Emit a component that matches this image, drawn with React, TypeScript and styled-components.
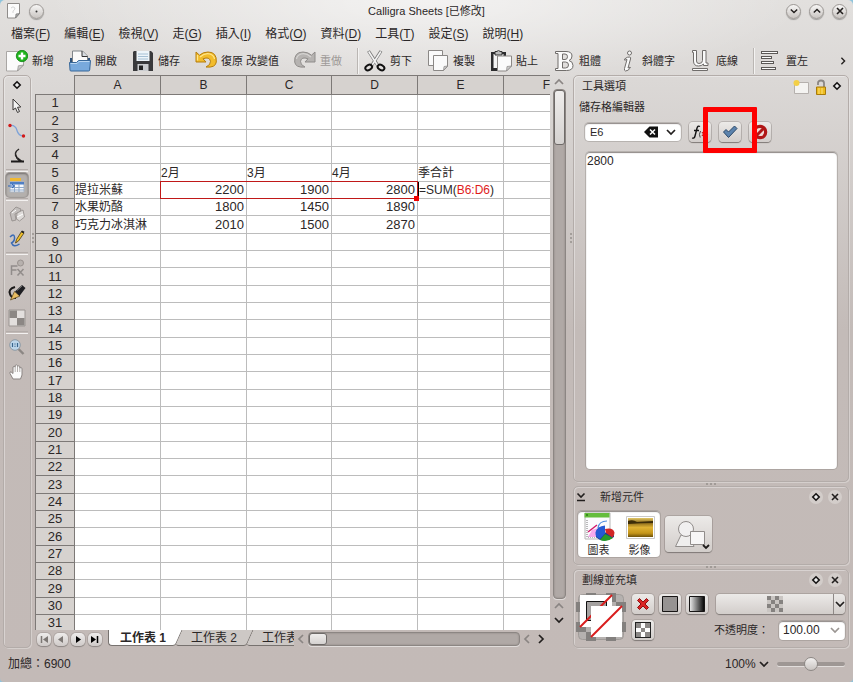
import React from 'react';
import styled, { createGlobalStyle, css } from 'styled-components';

const GlobalStyle = createGlobalStyle`
  *, *::before, *::after { box-sizing: border-box; }
  body {
    margin: 0;
    background: #8fc4dc;
    color: #2b2727;
    font: 12px/16px "Liberation Sans", "Noto Sans CJK TC", sans-serif;
  }
  button, input, select, textarea {
    font: inherit;
    color: inherit;
    margin: 0;
    padding: 0;
    border: 0;
    background: none;
    outline: none;
  }
`;

const Window = styled.div`
  display: flex;
  flex-direction: column;
  height: 100vh;
  overflow: hidden;
  border-radius: 5px 5px 4px 4px;
  background:
    radial-gradient(ellipse 380px 90px at 50% 0, rgba(255, 255, 255, 0.6), rgba(255, 255, 255, 0)),
    linear-gradient(#e2e0de 0, #dbd8d6 80px, #c3bbb8 330px, #c3bab7 100%);
`;

/* ---------- title bar, menu, main toolbar ---------- */

const TitleBar = styled.header`
  display: grid;
  grid-template-columns: 1fr auto 1fr;
  align-items: center;
  flex: none;
  height: 22px;
  padding: 0 6px;
`;

const TitleGroup = styled.div<{ $end?: boolean }>`
  display: flex;
  align-items: center;
  gap: 8px;
  justify-content: ${(p) => (p.$end ? 'flex-end' : 'flex-start')};
`;

const TitleText = styled.h1`
  margin: 0;
  font-size: 11px;
  font-weight: 400;
  line-height: 16px;
`;

const RoundButton = styled.button`
  display: grid;
  place-items: center;
  width: 15px;
  height: 15px;
  border-radius: 50%;
  border: 1px solid #9b9794;
  background: linear-gradient(#f7f6f5, #c9c5c2);
  box-shadow: 0 1px 1px rgba(0, 0, 0, 0.3);
`;

const MenuBar = styled.nav`
  display: flex;
  align-items: center;
  gap: 14px;
  flex: none;
  height: 24px;
  padding: 0 11px;
`;

const MenuButton = styled.button`
  white-space: nowrap;
  line-height: 18px;
  u { text-underline-offset: 2px; }
`;

const ToolBar = styled.div`
  display: flex;
  align-items: center;
  flex: none;
  height: 29px;
  padding: 0 6px;
  font-size: 11px;
`;

const ToolButton = styled.button`
  display: flex;
  align-items: center;
  gap: 4px;
  flex: none;
  margin-right: 15px;
  white-space: nowrap;
  &:disabled { color: #9d9997; }
`;

const ToolSeparator = styled.span`
  flex: none;
  width: 2px;
  height: 26px;
  margin-right: 5px;
  border-left: 1px solid #bab6b3;
  border-right: 1px solid #f4f3f2;
`;

const Overflow = styled.button`
  display: flex;
  margin-left: auto;
`;

/* ---------- main area ---------- */

const Main = styled.main`
  display: grid;
  grid-template-columns: 28px 4px minmax(0, 1fr) 5px 276px;
  flex: 1;
  min-height: 0;
  padding: 0 4px 0 3px;
`;

const frame = css`
  border: 1px solid #b3aca9;
  border-radius: 5px;
  box-shadow: inset 1px 1px 0 rgba(255, 255, 255, 0.35), 1px 1px 0 rgba(255, 255, 255, 0.3);
`;

const ToolBox = styled.aside`
  ${frame}
  display: flex;
  flex-direction: column;
  align-items: center;
  gap: 1px;
`;

const ToolBoxHandle = styled.button`
  display: grid;
  place-items: center;
  height: 17px;
`;

const ToolBoxButton = styled.button<{ $active?: boolean }>`
  display: grid;
  place-items: center;
  flex: none;
  width: 22px;
  height: 24px;
  border-radius: 4px;
  ${(p) =>
    p.$active &&
    css`
      background: #b4b0ad;
      box-shadow: inset 0 1px 2px #74706e, 0 0 0 1px #a09b98;
    `}
`;

const ToolBoxRule = styled.hr`
  flex: none;
  width: 22px;
  height: 3px;
  margin: 0;
  border: 0;
  border-top: 1px solid #b4adaa;
  border-bottom: 1px solid #f3f1f0;
`;

const Splitter = styled.div<{ $horizontal?: boolean }>`
  display: flex;
  flex-direction: ${(p) => (p.$horizontal ? 'row' : 'column')};
  align-items: center;
  justify-content: center;
  gap: 2px;
  flex: none;
  ${(p) => (p.$horizontal ? 'height: 4px;' : 'padding-bottom: 248px;')}
  i {
    width: 2px;
    height: 2px;
    border-radius: 1px;
    background: #96908d;
  }
`;

const SheetArea = styled.section`
  display: flex;
  flex-direction: column;
  min-height: 0;
`;

const SheetRow = styled.div`
  display: flex;
  flex: 1;
  min-height: 0;
`;

const SheetView = styled.div`
  flex: 1;
  min-width: 0;
  overflow: hidden;
`;

const Grid = styled.table`
  width: 555px;
  table-layout: fixed;
  border-collapse: separate;
  border-spacing: 0;
  th, td {
    height: 17px;
    padding: 0;
    line-height: 16px;
    font-weight: 400;
    white-space: nowrap;
  }
  tbody tr:nth-child(3n + 2) > * { height: 18px; }
`;

const Col = styled.col<{ $w: number }>`
  width: ${(p) => p.$w}px;
`;

const Corner = styled.td`
  border-bottom: 1px solid #7d7977;
  border-right: 1px solid #7d7977;
`;

const ColumnHead = styled.th`
  && { height: 20px; }
  background: #d6d2cf;
  border: solid #7d7977;
  border-width: 1px 1px 1px 0;
`;

const RowHead = styled.th`
  background: #d6d2cf;
  border: solid #7d7977;
  border-width: 0 1px 1px 1px;
  font-size: 13px;
`;

const Cell = styled.td<{ $number?: boolean }>`
  position: relative;
  background: #fff;
  border: solid #bcbcbc;
  border-width: 0 1px 1px 0;
  text-align: ${(p) => (p.$number ? 'right' : 'left')};
  && {
    padding: ${(p) => (p.$number ? '0 2px 0 0' : '0')};
    font-size: ${(p) => (p.$number ? 13 : 12)}px;
  }
`;

const RangeOutline = styled.div`
  position: absolute;
  z-index: 1;
  top: -1px;
  left: -1px;
  width: 258px;
  height: 18px;
  border: 1px solid #c01818;
  &::after {
    content: '';
    position: absolute;
    right: -2px;
    bottom: -3px;
    width: 5px;
    height: 5px;
    background: #f00000;
  }
`;

const CellEditor = styled.span`
  display: block;
  border-left: 1px solid #000;
  em {
    font-style: normal;
    color: #e01b1b;
  }
`;

const VScroll = styled.div`
  display: flex;
  flex-direction: column;
  align-items: center;
  width: 18px;
  padding-bottom: 3px;
`;

const ScrollButton = styled.button`
  display: grid;
  place-items: center;
  flex: none;
  width: 14px;
  height: 14px;
`;

const Track = styled.div<{ $vertical?: boolean }>`
  flex: 1;
  min-height: 0;
  border: 1px solid #8c8683;
  border-radius: 4px;
  background: #b0a9a6;
  box-shadow: inset 0 0 2px #857f7c, 0 1px 0 rgba(255, 255, 255, 0.5);
  ${(p) => (p.$vertical ? 'width: 13px;' : 'height: 14px;')}
`;

const Thumb = styled.div<{ $vertical?: boolean }>`
  border: 1px solid #6e6a68;
  border-radius: 3px;
  background: linear-gradient(#efedec, #d5d2d0);
  ${(p) => (p.$vertical ? 'width: 11px; height: 55px;' : 'width: 18px; height: 12px;')}
`;

const BottomBar = styled.div`
  display: flex;
  align-items: center;
  flex: none;
  height: 18px;
`;

const SheetNav = styled.div`
  display: flex;
  gap: 3px;
  padding-left: 2px;
  width: 73px;
`;

const NavButton = styled.button<{ $dim?: boolean }>`
  display: grid;
  place-items: center;
  width: 14px;
  height: 13px;
  border-radius: 5px;
  color: ${(p) => (p.$dim ? '#7c7774' : '#000')};
  background: linear-gradient(#eeeceb, #cfcac8);
  box-shadow: 0 1px 1px #8e8886, 0 0 0 1px rgba(120, 112, 108, 0.25);
`;

const Tabs = styled.div`
  display: flex;
  align-self: stretch;
  width: 186px;
  overflow: hidden;
`;

const Tab = styled.button<{ $active?: boolean }>`
  position: relative;
  z-index: ${(p) => (p.$active ? 1 : 0)};
  flex: none;
  height: 16px;
  padding: 0 13px 0 12px;
  line-height: 16px;
  white-space: nowrap;
  font-weight: ${(p) => (p.$active ? 700 : 400)};
  &::before {
    content: '';
    position: absolute;
    z-index: -1;
    inset: 0 0 0 ${(p) => (p.$active ? 6 : 0)}px;
    transform: skewX(-24deg);
    border: solid #77726f;
    border-width: 0 1px 1px 0;
    border-radius: 0 0 3px 3px;
    background: ${(p) => (p.$active ? '#fff' : '#cdc8c5')};
  }
  &::after {
    content: '';
    position: absolute;
    z-index: -1;
    inset: 0 auto 0 0;
    display: ${(p) => (p.$active ? 'block' : 'none')};
    width: 20px;
    border: solid #77726f;
    border-width: 0 0 1px 1px;
    border-radius: 0 0 0 4px;
    background: #fff;
  }
`;

const HScroll = styled.div`
  display: flex;
  align-items: center;
  flex: 1;
  padding-right: 20px;
`;

/* ---------- docks ---------- */

const Docks = styled.aside`
  display: flex;
  flex-direction: column;
  min-height: 0;
`;

const Dock = styled.section<{ $grow?: boolean }>`
  ${frame}
  display: flex;
  flex-direction: column;
  ${(p) => (p.$grow ? 'flex: 1; min-height: 0;' : 'flex: none; height: 79px;')}
  font-size: 11px;
`;

const DockHead = styled.header<{ $collapsible?: boolean }>`
  display: flex;
  align-items: center;
  flex: none;
  height: 20px;
  padding: 0 6px 0 ${(p) => (p.$collapsible ? 2 : 8)}px;
`;

const DockTitle = styled.h2<{ $indent?: boolean }>`
  flex: 1;
  margin: 0;
  padding-left: ${(p) => (p.$indent ? 14 : 0)}px;
  font-size: 11px;
  font-weight: 400;
`;

const DockTool = styled.button<{ $round?: boolean }>`
  display: grid;
  place-items: center;
  height: 14px;
  margin-left: 5px;
  ${(p) => p.$round && 'width: 14px; border-radius: 50%; background: #d3cdca;'}
`;

const EditorLabel = styled.label`
  padding-left: 5px;
  line-height: 22px;
`;

const CellBar = styled.div`
  display: flex;
  align-items: center;
  gap: 8px;
  height: 28px;
  padding-left: 11px;
`;

const field = css`
  background: #fff;
  border-radius: 4px;
  box-shadow: inset 0 1px 1px #8e8886, 0 0 0 1px rgba(130, 122, 118, 0.35);
`;

const NameBox = styled.div`
  ${field}
  display: flex;
  align-items: center;
  gap: 8px;
  width: 96px;
  height: 18px;
  padding: 0 5px;
  input {
    flex: 1;
    min-width: 0;
    line-height: 16px;
  }
  button { display: flex; }
`;

const raised = css`
  border-radius: 4px;
  background: linear-gradient(#eceae8, #d2cdca);
  box-shadow: 0 1px 1px #817b78, 0 0 0 1px rgba(120, 112, 108, 0.3);
`;

const PushButton = styled.button`
  ${raised}
  display: grid;
  place-items: center;
  flex: none;
  width: 22px;
  height: 20px;
`;

const Highlighted = styled.div`
  position: relative;
  display: flex;
  &::after {
    content: '';
    position: absolute;
    z-index: 2;
    inset: -15px -16px -11px;
    border: 5px solid #fe0000;
    border-radius: 1px;
    pointer-events: none;
  }
`;

const FormulaText = styled.textarea`
  ${field}
  flex: 1;
  min-height: 0;
  margin: 6px 11px 12px 12px;
  padding: 1px;
  resize: none;
  font-size: 12px;
`;

const ShapeRow = styled.div`
  display: flex;
  align-items: center;
  gap: 5px;
  padding: 4px 0 0 4px;
`;

const ShapeList = styled.div`
  ${field}
  display: flex;
  width: 82px;
  height: 46px;
`;

const ShapeItem = styled.button`
  display: flex;
  flex: 1;
  flex-direction: column;
  align-items: center;
  line-height: 14px;
`;

const ShapeMenu = styled.button`
  ${raised}
  display: flex;
  align-items: center;
  justify-content: center;
  width: 47px;
  height: 36px;
`;

const FillBody = styled.div`
  display: flex;
  gap: 6px;
  padding: 3px 3px 0 2px;
`;

const FillColumn = styled.div`
  display: flex;
  flex: 1;
  flex-direction: column;
  gap: 6px;
  padding-top: 1px;
`;

const FillRow = styled.div`
  display: flex;
  align-items: center;
  gap: 5px;
`;

const PatternButton = styled.button`
  ${raised}
  display: grid;
  grid-template-columns: 1fr 12px;
  align-items: center;
  justify-items: center;
  flex: 1;
  height: 20px;
  margin-left: 3px;
  span {
    display: grid;
    place-items: center;
    width: 100%;
    height: 20px;
    border-left: 1px solid #8e8886;
  }
`;

const OpacityLabel = styled.label`
  margin-left: auto;
  padding-right: 5px;
`;

const OpacityBox = styled.div`
  ${field}
  display: flex;
  align-items: center;
  width: 66px;
  height: 19px;
  padding: 0 4px 0 4px;
  font-size: 12px;
  input { width: 47px; }
  button { display: flex; }
`;

/* ---------- status bar ---------- */

const StatusBar = styled.footer`
  display: flex;
  align-items: center;
  flex: none;
  height: 34px;
  padding: 0 8px 2px;
`;

const Sum = styled.output`
  flex: 1;
`;

const ZoomBox = styled.label`
  display: flex;
  align-items: center;
  gap: 2px;
  margin-right: 8px;
  select {
    appearance: none;
    width: 32px;
    line-height: 16px;
  }
`;

const ZoomSlider = styled.input`
  appearance: none;
  width: 68px;
  height: 16px;
  &::-webkit-slider-runnable-track {
    height: 4px;
    border-radius: 2px;
    background: #9e9794;
    box-shadow: 0 1px 0 #e2dedc;
  }
  &::-webkit-slider-thumb {
    appearance: none;
    width: 14px;
    height: 14px;
    margin-top: -5px;
    border: 1px solid #8d8885;
    border-radius: 50%;
    background: linear-gradient(#f2f0ef, #c9c4c1);
  }
`;

/* ---------- icons ---------- */

type SvgProps = { w: number; h: number; children: React.ReactNode };
const Svg = ({ w, h, children }: SvgProps) => (
  <svg width={w} height={h} viewBox={`0 0 ${w} ${h}`} fill="none" aria-hidden="true">
    {children}
  </svg>
);

type Dir = 'up' | 'down' | 'left' | 'right';
const chevrons: Record<Dir, string> = {
  up: 'M1 7 5 3l4 4',
  down: 'M1 3l4 4 4-4',
  left: 'M7 1 3 5l4 4',
  right: 'M3 1l4 4-4 4',
};
const Chevron = ({ dir, color = '#221f1e', size = 10 }: { dir: Dir; color?: string; size?: number }) => (
  <svg width={size} height={size} viewBox="0 0 10 10" fill="none" aria-hidden="true">
    <path d={chevrons[dir]} stroke={color} strokeWidth="1.7" />
  </svg>
);

const Diamond = () => (
  <Svg w={10} h={10}>
    <path d="M5 1.8 8.2 5 5 8.2 1.8 5Z" fill="#eee" stroke="#171515" strokeWidth="1.6" />
  </Svg>
);

const Cross = () => (
  <Svg w={10} h={10}>
    <path d="m2 2 6 6M8 2 2 8" stroke="#221f1e" strokeWidth="1.6" />
  </Svg>
);

const Page = ({ x = 0, y = 0 }: { x?: number; y?: number }) => (
  <g transform={`translate(${x} ${y})`}>
    <path d="M.5.5h14v11l-4 4H.5Z" fill="#fafafa" stroke="#8b8886" />
    <path d="m10.5 15.5.5-4 3.5-.5Z" fill="#cfcfcf" stroke="#8b8886" strokeWidth=".7" />
  </g>
);

const icons = {
  doc: (
    <Svg w={15} h={16}>
      <path d="M1.5.5h12v10l-4 4.500h-8Z" fill="#fbfbfb" stroke="#8f8c8a" />
      <path d="m9.500 15 .5-4 3.500-.5Z" fill="#aaa" stroke="#777" strokeWidth=".7" />
      <path d="M5 5q2-2.500 4 0Q9 7 7 8v2" stroke="#d4d4d4" />
    </Svg>
  ),
  new: (
    <Svg w={22} h={22}>
      <path d="M.5 1.500h17V15l-6 6H.5Z" fill="#fbfbfb" stroke="#a9a6a4" />
      <path d="m11.500 21 .8-5.200 5.200-.8Z" fill="#ccc" stroke="#8f8c8a" strokeWidth=".7" />
      <circle cx="16" cy="6" r="5.700" fill="#1fb41c" stroke="#0d8110" strokeWidth=".8" />
      <path d="M16 2.500v7M12.500 6h7" stroke="#fff" strokeWidth="2.400" />
    </Svg>
  ),
  open: (
    <Svg w={22} h={22}>
      <path d="M1 8h20v11H1Z" fill="#30547c" />
      <path d="M3.500 1h10l5 5v8h-15Z" fill="#fafafa" stroke="#7f8489" />
      <path d="M13 1v5.500h5.500" fill="#d8dde2" stroke="#333" />
      <path d="M.5 12.500h7l2-2h12l-.8 9.500q-.2 1-1.200 1H2q-1 0-1-1Z" fill="#78a9dc" stroke="#376799" />
      <path d="M1.500 13.500h6.500l2-2h10.500" stroke="#b9d6f2" />
    </Svg>
  ),
  save: (
    <Svg w={22} h={22}>
      <path d="M2 1h17l2 2v18H1V2Z" fill="#39393b" />
      <path d="M4.500 1h13v10h-13Z" fill="#eef5fa" />
      <path d="M6 4h10M6 6.500h10M6 9h10" stroke="#a6c0d4" />
      <path d="M5.500 14h11v7h-11Z" fill="#c9cbce" />
      <path d="M7 15.500h4v4.500H7Z" fill="#222" />
    </Svg>
  ),
  undo: (
    <Svg w={22} h={22}>
      <path d="M1 2v10h10L8 8.800q6.500-2.500 7.500 2.500.4 3.500-4.500 5.700 9.500 1 10.300-5Q22 2 13 2 8 2 4.500 5.200Z" fill="#f2bc2b" stroke="#b57d0c" />
      <path d="M2.500 5v5.500M5 7q5-4.500 10-3 4 1.500 4.500 5" stroke="#ffe68b" strokeWidth="1.300" />
    </Svg>
  ),
  redo: (
    <Svg w={22} h={22}>
      <path d="M21 2v10H11l3-3.200q-6.500-2.500-7.500 2.500-.4 3.500 4.500 5.700-9.500 1-10.300-5Q0 2 9 2q5 0 8.500 3.200Z" fill="#b6b3b1" stroke="#8f8c8a" />
      <path d="M17 7Q12 2.500 7 4 3 5.500 2.500 9" stroke="#d6d4d2" strokeWidth="1.300" />
    </Svg>
  ),
  cut: (
    <Svg w={22} h={22}>
      <path d="M4.500 1 14.500 16.500" stroke="#777" strokeWidth="3.200" />
      <path d="M17 1 7 16.500" stroke="#777" strokeWidth="3.200" />
      <path d="M4.700 1.500 14 16M16.800 1.500 7.500 16" stroke="#f3f3f3" strokeWidth="1.600" />
      <ellipse cx="4.700" cy="17.500" rx="3.600" ry="2.500" transform="rotate(-30 4.700 17.500)" stroke="#111" strokeWidth="2" />
      <ellipse cx="17" cy="17.500" rx="3.600" ry="2.500" transform="rotate(30 17 17.500)" stroke="#111" strokeWidth="2" />
    </Svg>
  ),
  copy: (
    <Svg w={22} h={22}>
      <Page x={1} y={0} />
      <Page x={6} y={5} />
    </Svg>
  ),
  paste: (
    <Svg w={22} h={22}>
      <path d="M1 2h15v19H1Z" fill="#2b2b2d" />
      <path d="M3.500 4h10v14h-10Z" fill="#f3f3f3" />
      <path d="M5 1.500h2Q8.500-1 10 1.500h2V5H5Z" fill="#bbb" stroke="#333" />
      <g transform="translate(7 5.500)">
        <path d="M.5.5h14v10l-5 5h-9Z" fill="#fafafa" stroke="#8b8886" />
        <path d="m9.500 15.500.5-4.500 4.500-.5Z" fill="#ccc" stroke="#8b8886" strokeWidth=".7" />
      </g>
    </Svg>
  ),
  bold: (
    <Svg w={22} h={22}>
      <path
        fillRule="evenodd"
        d="M2.500 1.500h10.500q6 0 6 4.500 0 3.500-3 4.500 4 1 4 5 0 5-6.500 5h-11v-2h2.500v-15H2.500ZM9.500 4v5.500h2.500q2.500 0 2.500-2.800Q14.500 4 12 4ZM9.500 12v6h3q3 0 3-3t-3-3Z"
        fill="#fbfbfb"
        stroke="#706d6b"
      />
    </Svg>
  ),
  italic: (
    <Svg w={22} h={22}>
      <circle cx="13.500" cy="3" r="2" fill="#fafafa" stroke="#706d6b" />
      <path d="M8.500 9q3-2.500 5.500-2 1 .3.500 2l-2.500 9q1 0 2-1l.3 1q-2.300 3-4.800 3-1.500-.3-1-2.500l2.500-9q-1 0-2.200.8Z" fill="#fafafa" stroke="#706d6b" />
    </Svg>
  ),
  underline: (
    <Svg w={22} h={22}>
      <path d="M2.500.5h4v10.500q0 2.500 2.500 2.500 3.500 0 3.500-3V.5h3.500v12.500h2v2.500h-4.500v-1.500q-2 2-5 2-5 0-5-5V2.500h-1Z" fill="#fafafa" stroke="#706d6b" />
      <path d="M2.500 18.500h15v2h-15Z" fill="#fafafa" stroke="#706d6b" />
    </Svg>
  ),
  alignLeft: (
    <Svg w={22} h={22}>
      {[
        [1.5, 16],
        [6.5, 10],
        [11.5, 12],
        [17.5, 14],
      ].map(([y, w]) => (
        <rect key={y} x="1.500" y={y} width={w} height="2" fill="#fafafa" stroke="#5c5957" />
      ))}
    </Svg>
  ),
  pointer: (
    <Svg w={20} h={20}>
      <path d="M6 3v11l2.500-2 2 4.500 2-1-2-4.200 3.300-.3Z" fill="#f4f4f4" stroke="#3a3736" />
    </Svg>
  ),
  connector: (
    <Svg w={20} h={20}>
      <path d="M3.500 4.500q5-.5 6.500 5t6.500 5.500" stroke="#7ea3d8" strokeWidth="1.300" />
      <circle cx="3" cy="4.500" r="1.700" fill="#d21919" />
      <circle cx="16.500" cy="15" r="1.700" fill="#d21919" />
    </Svg>
  ),
  path: (
    <Svg w={20} h={20}>
      <path d="M4 15.500h13" stroke="#1c1a1a" strokeWidth="2" />
      <path d="M12 3Q6 7 10 11.500l5 4" stroke="#2b2928" strokeWidth="1.500" />
      <path d="m9 8 1 4 5 3.500h-3L9 12Z" fill="#1c1a1a" />
    </Svg>
  ),
  table: (
    <Svg w={20} h={20}>
      <path d="M3 3h11v3H3Z" fill="#f0b832" />
      <path d="M3 7h14v10H3Z" fill="#f5f8fc" stroke="#a9b4c2" />
      <path d="M3 7h14v2.500H3Z" fill="#4f7fc4" />
      <path d="M3 12.500h14M3 15h14M7.500 9v8M12 9v8" stroke="#8fa9c9" />
      <path d="M1 11h6M5 9l2.500 2L5 13" stroke="#2a63b8" />
    </Svg>
  ),
  solid: (
    <Svg w={20} h={20}>
      <path d="M3 9 9 3l5 2-1 3-5 2 1 6-4 1Z" fill="#c2bebc" stroke="#8f8a88" strokeWidth=".8" />
      <path d="m10 9 6-3 1.500 7-5 4-3-2Z" fill="#dedbd9" stroke="#8f8a88" strokeWidth=".8" />
      <path d="m5 9 4-3M10 13l6-3" stroke="#fff" />
    </Svg>
  ),
  pencil: (
    <Svg w={20} h={20}>
      <path d="M3 8q4-4 4.500 0t-3 6q2 5 8 1" stroke="#3a6bb5" strokeWidth="1.500" />
      <path d="m8.500 14 1-3.500 5-8 2.500 1.500-5.500 8Z" fill="#efc02c" stroke="#4a3a12" strokeWidth=".8" />
      <path d="m14 3 1-1.500 2.500 1.300-1 1.700Z" fill="#222" />
    </Svg>
  ),
  fx: (
    <Svg w={20} h={20}>
      <path d="M4.500 17V8h6M4.500 12h5M10.500 11l6 6.500M16.500 11l-6 6.500" stroke="#918c8a" strokeWidth="1.500" />
      <circle cx="13.500" cy="5" r="3" fill="#b7b1ae" stroke="#99928f" />
    </Svg>
  ),
  nib: (
    <Svg w={20} h={20}>
      <path d="M8 4Q1 6 3 11q1 4 6 4" stroke="#191717" strokeWidth="2" />
      <path d="m3.500 17 4-8.500 5.500 4.500Z" fill="#e9bd63" stroke="#5a4316" strokeWidth=".7" />
      <path d="m8 8.500 7-6.500 3.500 3-6 8Z" fill="#1e1e22" />
      <path d="m10 7.500 5-4.500" stroke="#777" />
    </Svg>
  ),
  checker: (
    <Svg w={20} h={20}>
      <path d="M2 2h16v16H2Z" fill="#e3dfdd" stroke="#9b9592" />
      <path d="M2.500 2.500H10V10H2.500ZM10 10h7.500v7.500H10Z" fill="#8c8784" />
    </Svg>
  ),
  zoom: (
    <Svg w={20} h={20}>
      <path d="m11.500 12 5 5" stroke="#8c8784" strokeWidth="2.400" />
      <circle cx="8" cy="8" r="5.300" fill="#bcd6ea" stroke="#8d9aa5" />
      <path d="M5.500 6v4M10.500 6v4M8 6.500v1M8 8.800v1" stroke="#37658d" strokeWidth="1.200" />
    </Svg>
  ),
  hand: (
    <Svg w={20} h={20}>
      <path d="M6 17 3 11.500q-.5-2 1-1.700L6 11.500V5q1.200-1.300 2.200 0V3.500q1.200-1.300 2.300 0v1q1.200-1.300 2.300 0V6q1.200-1 2.200.3V13l-1.500 4Z" fill="#fbfbfb" stroke="#8b8583" />
      <path d="M8.200 5v5M10.500 4.500V10M12.800 6v4" stroke="#a49e9b" strokeWidth=".8" />
    </Svg>
  ),
};

const ClearIcon = () => (
  <Svg w={14} h={12}>
    <path d="M0 6 5.500.5H14v11H5.500Z" fill="#111" />
    <path d="m6 3.500 5 5M11 3.500l-5 5" stroke="#fff" strokeWidth="1.500" />
  </Svg>
);

const FunctionIcon = () => (
  <Svg w={18} h={16}>
    <path d="M9 2.500Q6.500 1 5.800 5L4 12q-.7 3-2.800 1.800M3 6.500h5" stroke="#111" strokeWidth="1.400" />
    <path d="M9.500 7q-2 3.500-.3 6.500" stroke="#333" strokeWidth=".9" />
    <path d="m11 8 3 4M14 8l-3 4" stroke="#b22" strokeWidth="1.200" />
    <path d="M15.500 7q2 3.500.3 6.500" stroke="#333" strokeWidth=".9" />
  </Svg>
);

const CheckIcon = () => (
  <Svg w={16} h={14}>
    <path d="m1.500 7 2.500-2.500L6.500 7l6-6L15 3.500l-8.500 9Z" fill="#5c83ad" stroke="#2b4868" strokeLinejoin="round" />
  </Svg>
);

const CancelIcon = () => (
  <Svg w={16} h={16}>
    <circle cx="8" cy="8" r="5.700" fill="#efd9d6" stroke="#b01717" strokeWidth="3.200" />
    <path d="m4 12 8-8" stroke="#b01717" strokeWidth="3" />
  </Svg>
);

const NoteIcon = () => (
  <Svg w={18} h={16}>
    <path d="M2.500 3.500h14v11h-14Z" fill="#f4f3f1" stroke="#b5b0ad" />
    <circle cx="4.500" cy="4" r="3" fill="#f3cf46" />
  </Svg>
);

const LockIcon = () => (
  <Svg w={12} h={16}>
    <path d="M3 6V4q0-2.500 3-2.500T9 4v4" stroke="#8b8784" strokeWidth="1.800" />
    <path d="M1.500 8h9v7.500h-9Z" fill="#edbb1e" stroke="#a87b0b" />
    <path d="M4 9v6M7 9v6" stroke="#ffe27a" />
  </Svg>
);

const CollapseIcon = () => (
  <Svg w={10} h={10}>
    <path d="M1.500 1.500 5 5l3.500-3.500M1 8.500h8" stroke="#221f1e" strokeWidth="1.600" />
  </Svg>
);

const ChartIcon = () => (
  <Svg w={32} h={32}>
    <path d="M2 2h25v26H2Z" fill="#fbfbfd" stroke="#b5b5b5" />
    <path d="M1.500 2h25v4.500h-25Z" fill="#65bd3d" />
    <circle cx="4" cy="4" r="1" fill="#2c7a14" />
    <path d="M4 9v17h12" stroke="#777" strokeDasharray="1 1" />
    <path d="m5 26 4-7 6-2v9Z" fill="#f6a9ec" />
    <path d="m5 21 9-7" stroke="#d3186b" strokeWidth="1.500" />
    <path d="M15 17q1-7 9-7" stroke="#4e8ee0" strokeWidth="1.200" />
    <path d="M13 22v4q7 7 18 0v-5Z" fill="#163f91" />
    <path d="m22 23 8 4q-6 4.500-13 2Z" fill="#269a28" />
    <path d="M22 22.500 17 28q-5-2-4.500-6.500Q14 15 22 14.500Z" fill="#2459d3" />
    <path d="m23 22-1-4q8-2 9.500 3.500 0 3-2 5Z" fill="#d22626" />
  </Svg>
);

const PhotoIcon = () => (
  <Svg w={32} h={32}>
    <defs>
      <linearGradient id="lake" x1="0" y1="0" x2="0" y2="1">
        <stop offset="0" stopColor="#e3c766" />
        <stop offset=".25" stopColor="#8a6a1c" />
        <stop offset=".5" stopColor="#dfb233" />
        <stop offset=".8" stopColor="#c4951a" />
        <stop offset="1" stopColor="#6d5109" />
      </linearGradient>
    </defs>
    <path d="M2.500 5.500h28v22h-28Z" fill="#fff" stroke="#c9c9c9" />
    <path d="M4 7h25v19H4Z" fill="url(#lake)" />
    <path d="M4 10q5-2 9 1l16-1v2q-12 0-25 1Z" fill="#3c2c08" />
  </Svg>
);

const ShapesIcon = () => (
  <Svg w={44} h={32}>
    <path d="M8.500 28.500 14 17h9l4 11.500Z" fill="#efeeed" stroke="#918d8b" />
    <circle cx="19" cy="11" r="7.500" fill="#f1f0f0" stroke="#918d8b" />
    <path d="M23.500 13.500h14v13h-14Z" fill="#f7f6f6" stroke="#918d8b" />
    <path d="m36 27 3 3 3-3" stroke="#1e1b1a" strokeWidth="1.800" />
  </Svg>
);

const PatternTile = ({ size, framed }: { size: number; framed?: boolean }) => (
  <svg width={size} height={size} viewBox="0 0 16 16" shapeRendering="crispEdges" aria-hidden="true">
    <path d="M0 0h16v16H0Z" fill={framed ? '#fff' : '#c9c5c2'} />
    {framed ? (
      <path d="M1 1h5v5H1ZM10 1h5v5h-5ZM6 6h4v4H6ZM1 10h5v5H1ZM10 10h5v5h-5Z" fill="#8b8886" />
    ) : (
      <path d="M0 0h4v4H0ZM8 0h4v4H8ZM4 4h4v4H4ZM12 4h4v4h-4ZM0 8h4v4H0ZM8 8h4v4H8ZM4 12h4v4H4ZM12 12h4v4h-4Z" fill="#858280" />
    )}
    {framed && <path d="M.5.5h15v15H.5Z" fill="none" stroke="#222" />}
  </svg>
);

const FillStrokeIcon = () => (
  <Svg w={50} h={48}>
    <rect x="2.500" y="1.500" width="45" height="45" rx="4" fill="#b5b1af" stroke="#a09b98" />
    <path
      d="M10 0h10v9H10ZM30 0h10v9H30ZM0 9h10v10H0ZM40 9h10v10H40ZM20 9h10v10H20ZM0 29h10v10H0ZM40 29h10v10H40ZM10 39h10v9H10ZM30 39h10v9H30Z"
      fill="#83807e"
    />
    <path d="M4 2h32v32H4Z" fill="#fff" />
    <path d="M10.500 8.500h20v19h-20Z" fill="#a4a1a0" stroke="#111" />
    <path d="M4 34 36 2" stroke="#d91c1c" strokeWidth="2" />
    <path d="M15 13h31v31H15Z" fill="#fff" />
    <path d="M15 44 46 13" stroke="#d91c1c" strokeWidth="2" />
  </Svg>
);

const RemoveIcon = () => (
  <Svg w={14} h={14}>
    <path d="m1.500 3.500 2-2L7 5l3.500-3.500 2 2L9 7l3.500 3.500-2 2L7 9l-3.500 3.500-2-2L5 7Z" fill="#da2424" stroke="#8f0f0f" strokeLinejoin="round" />
  </Svg>
);

const Swatch = ({ gradient }: { gradient?: boolean }) => (
  <Svg w={16} h={16}>
    <defs>
      <linearGradient id="ramp">
        <stop offset="0" stopColor="#eee" />
        <stop offset="1" stopColor="#000" />
      </linearGradient>
    </defs>
    <path d="M.5.5h15v15H.5Z" fill={gradient ? 'url(#ramp)' : '#969392'} stroke="#171515" />
  </Svg>
);

const NavIcon = ({ back, end }: { back?: boolean; end?: boolean }) => (
  <Svg w={10} h={9}>
    <g transform={back ? 'matrix(-1 0 0 1 10 0)' : undefined}>
      <path d={end ? 'M1 1v7l5-3.500Z' : 'M3 1v7l5-3.500Z'} fill="currentColor" />
      {end && <path d="M7.500 1v7" stroke="currentColor" strokeWidth="1.500" />}
    </g>
  </Svg>
);

/* ---------- content ---------- */

const menus: [string, string][] = [
  ['檔案', 'F'], ['編輯', 'E'], ['檢視', 'V'], ['走', 'G'], ['插入', 'I'],
  ['格式', 'O'], ['資料', 'D'], ['工具', 'T'], ['設定', 'S'], ['說明', 'H'],
];

type IconName = keyof typeof icons;
const tools: ({ icon: IconName; label: string; disabled?: boolean } | null)[] = [
  { icon: 'new', label: '新增' },
  { icon: 'open', label: '開啟' },
  { icon: 'save', label: '儲存' },
  { icon: 'undo', label: '復原 改變值' },
  { icon: 'redo', label: '重做', disabled: true },
  null,
  { icon: 'cut', label: '剪下' },
  { icon: 'copy', label: '複製' },
  { icon: 'paste', label: '貼上' },
  { icon: 'bold', label: '粗體' },
  { icon: 'italic', label: '斜體字' },
  { icon: 'underline', label: '底線' },
  null,
  { icon: 'alignLeft', label: '置左' },
];

const toolBox: (IconName | null)[] = [
  'pointer', 'connector', 'path', null, 'table', null, 'solid', 'pencil', null,
  'fx', 'nib', 'checker', null, 'zoom', 'hand',
];

const columns = ['A', 'B', 'C', 'D', 'E', 'F'];
const columnWidths = [40, 86, 86, 85, 86, 86, 86];
const cells: Record<string, string> = {
  B5: '2月', C5: '3月', D5: '4月', E5: '季合計',
  A6: '提拉米蘇', B6: '2200', C6: '1900', D6: '2800',
  A7: '水果奶酪', B7: '1800', C7: '1450', D7: '1890',
  A8: '巧克力冰淇淋', B8: '2010', C8: '1500', D8: '2870',
};
const rows = Array.from({ length: 31 }, (_, i) => i + 1);

const Dots = ({ horizontal }: { horizontal?: boolean }) => (
  <Splitter $horizontal={horizontal}>
    <i />
    <i />
    <i />
  </Splitter>
);

const SheetCell = ({ id }: { id: string }) => {
  if (id === 'E6') {
    return (
      <Cell>
        <CellEditor>
          =SUM(<em>B6:D6</em>)
        </CellEditor>
      </Cell>
    );
  }
  const value = cells[id] ?? '';
  return (
    <Cell $number={/^\d+$/.test(value)}>
      {value}
      {id === 'B6' && <RangeOutline />}
    </Cell>
  );
};

const DockControls = () => (
  <>
    <DockTool $round aria-label="浮動"><Diamond /></DockTool>
    <DockTool $round aria-label="關閉"><Cross /></DockTool>
  </>
);

export default function App() {
  return (
    <>
      <GlobalStyle />
      <Window>
        <TitleBar>
          <TitleGroup>
            {icons.doc}
            <RoundButton aria-label="視窗選單">
              <Svg w={3} h={3}><circle cx="1.500" cy="1.500" r="1" fill="#333" /></Svg>
            </RoundButton>
          </TitleGroup>
          <TitleText>Calligra Sheets [已修改]</TitleText>
          <TitleGroup $end>
            <RoundButton aria-label="最小化"><Chevron dir="down" size={8} /></RoundButton>
            <RoundButton aria-label="最大化"><Chevron dir="up" size={8} /></RoundButton>
            <RoundButton aria-label="關閉"><Cross /></RoundButton>
          </TitleGroup>
        </TitleBar>

        <MenuBar>
          {menus.map(([name, key]) => (
            <MenuButton key={key}>{name}(<u>{key}</u>)</MenuButton>
          ))}
        </MenuBar>

        <ToolBar>
          {tools.map((t, i) =>
            t ? (
              <ToolButton key={i} disabled={t.disabled}>
                {icons[t.icon]}
                {t.label}
              </ToolButton>
            ) : (
              <ToolSeparator key={i} />
            ),
          )}
          <Overflow aria-label="更多"><Chevron dir="right" size={8} /></Overflow>
        </ToolBar>

        <Main>
          <ToolBox>
            <ToolBoxHandle aria-label="浮動"><Diamond /></ToolBoxHandle>
            {toolBox.map((name, i) =>
              name ? (
                <ToolBoxButton key={i} $active={name === 'table'} aria-label={name}>
                  {icons[name]}
                </ToolBoxButton>
              ) : (
                <ToolBoxRule key={i} />
              ),
            )}
          </ToolBox>
          <Dots />

          <SheetArea>
            <SheetRow>
              <SheetView>
                <Grid>
                  <colgroup>
                    {columnWidths.map((w, i) => <Col key={i} $w={w} />)}
                  </colgroup>
                  <thead>
                    <tr>
                      <Corner />
                      {columns.map((c) => <ColumnHead key={c} scope="col">{c}</ColumnHead>)}
                    </tr>
                  </thead>
                  <tbody>
                    {rows.map((r) => (
                      <tr key={r}>
                        <RowHead scope="row">{r}</RowHead>
                        {columns.map((c) => <SheetCell key={c} id={`${c}${r}`} />)}
                      </tr>
                    ))}
                  </tbody>
                </Grid>
              </SheetView>
              <VScroll>
                <ScrollButton aria-label="向上捲動"><Chevron dir="up" color="#8a8583" /></ScrollButton>
                <Track $vertical><Thumb $vertical /></Track>
                <ScrollButton aria-label="向上捲動"><Chevron dir="up" color="#8a8583" /></ScrollButton>
                <ScrollButton aria-label="向下捲動"><Chevron dir="down" /></ScrollButton>
              </VScroll>
            </SheetRow>
            <BottomBar>
              <SheetNav>
                <NavButton $dim aria-label="第一個"><NavIcon back end /></NavButton>
                <NavButton $dim aria-label="上一個"><NavIcon back /></NavButton>
                <NavButton aria-label="下一個"><NavIcon /></NavButton>
                <NavButton aria-label="最後一個"><NavIcon end /></NavButton>
              </SheetNav>
              <Tabs>
                <Tab $active>工作表 1</Tab>
                <Tab>工作表 2</Tab>
                <Tab>工作表</Tab>
              </Tabs>
              <HScroll>
                <ScrollButton aria-label="向左捲動"><Chevron dir="left" color="#8a8583" /></ScrollButton>
                <Track><Thumb /></Track>
                <ScrollButton aria-label="向左捲動"><Chevron dir="left" color="#8a8583" /></ScrollButton>
                <ScrollButton aria-label="向右捲動"><Chevron dir="right" /></ScrollButton>
              </HScroll>
            </BottomBar>
          </SheetArea>
          <Dots />

          <Docks>
            <Dock $grow>
              <DockHead>
                <DockTitle>工具選項</DockTitle>
                <DockTool aria-label="註解"><NoteIcon /></DockTool>
                <DockTool aria-label="鎖定"><LockIcon /></DockTool>
                <DockTool aria-label="浮動"><Diamond /></DockTool>
              </DockHead>
              <EditorLabel htmlFor="formula">儲存格編輯器</EditorLabel>
              <CellBar>
                <NameBox>
                  <input aria-label="儲存格" defaultValue="E6" />
                  <button aria-label="清除"><ClearIcon /></button>
                  <button aria-label="展開"><Chevron dir="down" /></button>
                </NameBox>
                <PushButton aria-label="函數"><FunctionIcon /></PushButton>
                <Highlighted>
                  <PushButton aria-label="套用"><CheckIcon /></PushButton>
                </Highlighted>
                <PushButton aria-label="取消"><CancelIcon /></PushButton>
              </CellBar>
              <FormulaText id="formula" defaultValue="2800" />
            </Dock>
            <Dots horizontal />
            <Dock>
              <DockHead $collapsible>
                <CollapseIcon />
                <DockTitle $indent>新增元件</DockTitle>
                <DockControls />
              </DockHead>
              <ShapeRow>
                <ShapeList>
                  <ShapeItem><ChartIcon />圖表</ShapeItem>
                  <ShapeItem><PhotoIcon />影像</ShapeItem>
                </ShapeList>
                <ShapeMenu aria-label="形狀"><ShapesIcon /></ShapeMenu>
              </ShapeRow>
            </Dock>
            <Dots horizontal />
            <Dock>
              <DockHead>
                <DockTitle>劃線並充填</DockTitle>
                <DockControls />
              </DockHead>
              <FillBody>
                <FillStrokeIcon />
                <FillColumn>
                  <FillRow>
                    <PushButton aria-label="無"><RemoveIcon /></PushButton>
                    <PushButton aria-label="單色"><Swatch /></PushButton>
                    <PushButton aria-label="漸層"><Swatch gradient /></PushButton>
                    <PatternButton aria-label="圖樣">
                      <PatternTile size={16} />
                      <span><Chevron dir="down" /></span>
                    </PatternButton>
                  </FillRow>
                  <FillRow>
                    <PushButton aria-label="圖樣填充"><PatternTile size={16} framed /></PushButton>
                    <OpacityLabel htmlFor="opacity">不透明度：</OpacityLabel>
                    <OpacityBox>
                      <input id="opacity" defaultValue="100.00" />
                      <button aria-label="調整"><Chevron dir="down" color="#9b9693" /></button>
                    </OpacityBox>
                  </FillRow>
                </FillColumn>
              </FillBody>
            </Dock>
          </Docks>
        </Main>

        <StatusBar>
          <Sum>加總：6900</Sum>
          <ZoomBox>
            <select aria-label="縮放" defaultValue="100%">
              <option>100%</option>
            </select>
            <Chevron dir="down" />
          </ZoomBox>
          <ZoomSlider type="range" aria-label="縮放比例" defaultValue={50} />
        </StatusBar>
      </Window>
    </>
  );
}
